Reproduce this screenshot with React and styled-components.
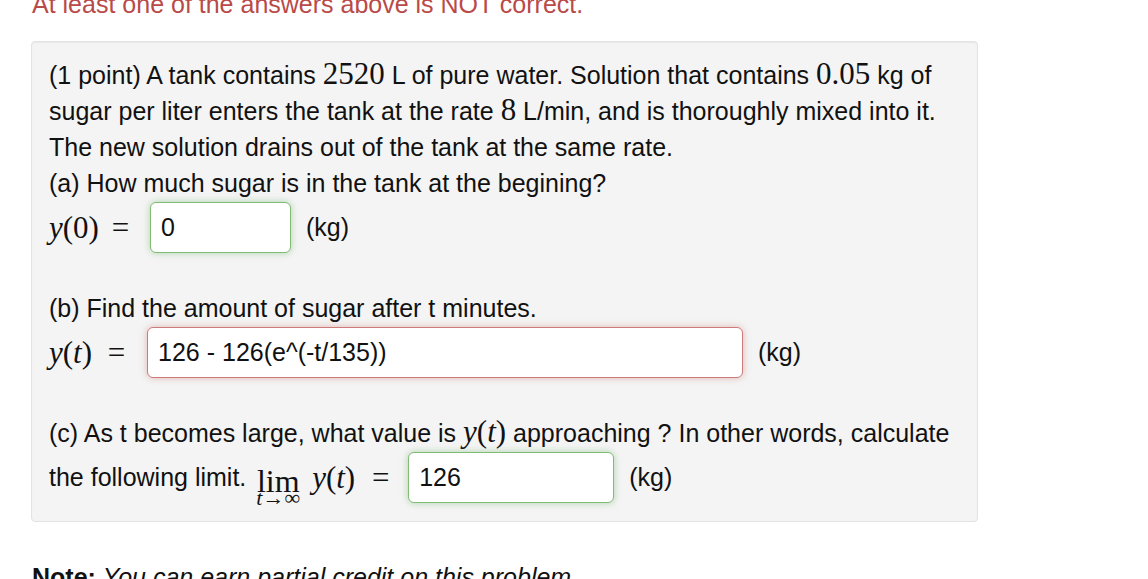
import React from 'react';
import styled, { createGlobalStyle } from 'styled-components';

const GlobalStyle = createGlobalStyle`
    html, body {
        margin: 0;
        padding: 0;
        background: #fff;
        overflow: hidden;
    }
    body {
        font-family: "Liberation Sans", Arial, sans-serif;
        font-size: 25px;
        color: #111;
    }
`;

const Page = styled.div`
    padding: 0 0 0 31px;
`;

const Message = styled.div`
    color: #b94a48;
    line-height: 25px;
    margin-top: -8px;
    padding-left: 1px;
    white-space: nowrap;
`;

const Well = styled.div`
    width: 947px;
    box-sizing: border-box;
    margin-top: 24px;
    padding: 15px 12px 18px 17px;
    background: #f4f4f4;
    border: 1px solid #e3e3e3;
    border-radius: 4px;
    box-shadow: inset 0 1px 1px rgba(0, 0, 0, 0.05);
    line-height: 36px;
`;

const Line = styled.div`
    white-space: nowrap;
    height: 36px;
    margin-top: ${props => props.gap || 0}px;
`;

const Math = styled.span`
    font-family: "Liberation Serif", "Times New Roman", serif;
    font-size: 31px;
    line-height: 1;
    font-style: ${props => (props.italic ? 'italic' : 'normal')};
`;

const AnswerRow = styled.div`
    display: flex;
    align-items: center;
    height: 52px;
    white-space: pre;
`;

const Equals = styled.span`
    display: inline-block;
    width: 23px;
    text-align: center;
    font-family: "Liberation Serif", "Times New Roman", serif;
    font-size: 31px;
    line-height: 1;
    margin-left: ${props => props.left || 10}px;
`;

const Answer = styled.input`
    box-sizing: border-box;
    width: ${props => props.width}px;
    height: 51px;
    margin-left: ${props => props.left || 16}px;
    padding: 0 10px;
    font-family: "Liberation Sans", Arial, sans-serif;
    font-size: 25px;
    color: #111;
    background: #fff;
    border-radius: 6px;
    outline: none;
    border: 1px solid ${props => (props.correct ? '#82bb74' : '#cc7b7b')};
    box-shadow: 0 0 7px ${props => (props.correct ? 'rgba(122, 186, 123, 0.6)' : 'rgba(213, 147, 146, 0.65)')};
`;

const Unit = styled.span`
    margin-left: 15px;
`;

const Limit = styled.span`
    display: inline-flex;
    flex-direction: column;
    align-items: center;
    margin: 0 12px 0 10px;
    font-family: "Liberation Serif", "Times New Roman", serif;
`;

const LimWord = styled.span`
    font-size: 32px;
    line-height: 30px;
`;

const LimSub = styled.span`
    font-size: 22px;
    line-height: 18px;
    margin-bottom: -18px;
    margin-top: -7px;
    i {
        font-style: italic;
    }
`;

const Note = styled.div`
    margin-top: 43px;
    padding-left: 1px;
    line-height: 25px;
    white-space: nowrap;
    b {
        font-weight: bold;
    }
    i {
        font-style: italic;
    }
`;

const Yof = ({ arg }) => (
    <Math>
        <Math italic>y</Math>(<Math italic={arg === 't'}>{arg}</Math>)
    </Math>
);

export default function App() {
    return (
        <Page>
            <GlobalStyle />
            <Message>At least one of the answers above is NOT correct.</Message>
            <Well>
                <Line>
                    (1 point) A tank contains <Math>2520</Math> L of pure water. Solution that contains <Math>0.05</Math> kg of
                </Line>
                <Line>sugar per liter enters the tank at the rate <Math>8</Math> L/min, and is thoroughly mixed into it.</Line>
                <Line>The new solution drains out of the tank at the same rate.</Line>
                <Line>(a) How much sugar is in the tank at the begining?</Line>
                <AnswerRow>
                    <Yof arg="0" />
                    <Equals>=</Equals>
                    <Answer correct width={141} left={18} defaultValue="0" />
                    <Unit>(kg)</Unit>
                </AnswerRow>
                <Line gap={37}>(b) Find the amount of sugar after t minutes.</Line>
                <AnswerRow>
                    <Yof arg="t" />
                    <Equals left={13}>=</Equals>
                    <Answer width={596} left={19} defaultValue="126 - 126(e^(-t/135))" />
                    <Unit>(kg)</Unit>
                </AnswerRow>
                <Line gap={37}>
                    (c) As t becomes large, what value is <Yof arg="t" /> approaching ? In other words, calculate
                </Line>
                <AnswerRow>
                    the following limit.
                    <Limit>
                        <LimWord>lim</LimWord>
                        <LimSub><i>t</i>→∞</LimSub>
                    </Limit>
                    <Yof arg="t" />
                    <Equals left={14}>=</Equals>
                    <Answer correct width={206} defaultValue="126" />
                    <Unit>(kg)</Unit>
                </AnswerRow>
            </Well>
            <Note>
                <b>Note:</b> <i>You can earn partial credit on this problem.</i>
            </Note>
        </Page>
    );
}
